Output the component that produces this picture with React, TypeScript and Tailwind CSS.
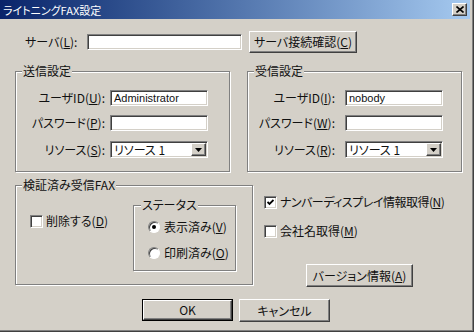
import React from "react";

const sunken =
  "bg-white border border-t-[#808080] border-l-[#808080] border-b-white border-r-white shadow-[inset_1px_1px_0_#404040,inset_-1px_-1px_0_#d4d0c8]";
const raised =
  "bg-[#d4d0c8] border border-t-white border-l-white border-b-[#404040] border-r-[#404040] shadow-[inset_-1px_-1px_0_#808080]";
const etched = "border border-[#808080] shadow-[inset_1px_1px_0_#ffffff,1px_1px_0_#ffffff]";

function K({ c }: { c: string }) {
  return <span className="underline decoration-1 underline-offset-[1px]">{c}</span>;
}

function CheckBox({ checked }: { checked?: boolean }) {
  return (
    <div className={`${sunken} w-[13px] h-[13px] flex-none flex items-center justify-center`}>
      {checked && (
        <svg width="7" height="7" viewBox="0 0 7 7">
          <polyline points="0.5,3 2.5,5 6.5,1" fill="none" stroke="black" strokeWidth="1.8" />
        </svg>
      )}
    </div>
  );
}

function Radio({ checked }: { checked?: boolean }) {
  return (
    <div className="w-[12px] h-[12px] flex-none rounded-full bg-white border border-t-[#808080] border-l-[#808080] border-r-white border-b-white shadow-[inset_1px_1px_0_#404040] flex items-center justify-center">
      {checked && <div className="w-[4px] h-[4px] rounded-full bg-black" />}
    </div>
  );
}

function Field({ text }: { text?: string }) {
  return (
    <div
      className={`${sunken} w-[98px] h-[16px] flex items-center pl-[3px] text-[11px] font-['Liberation_Sans',sans-serif]`}
    >
      {text}
    </div>
  );
}

function Select() {
  return (
    <div className={`${sunken} w-[98px] h-[17px] flex items-center justify-between pl-[3px] pr-[1px]`}>
      <span className="whitespace-nowrap">リソース 1</span>
      <div className={`${raised} w-[15px] h-[13px] flex items-center justify-center`}>
        <svg width="7" height="4" viewBox="0 0 7 4">
          <polygon points="0,0 7,0 3.5,4" fill="black" />
        </svg>
      </div>
    </div>
  );
}

function Group({
  title,
  labelW,
  gap,
  rows,
}: {
  title: string;
  labelW: string;
  gap: string;
  rows: { label: React.ReactNode; ctrl: React.ReactNode; cls: string }[];
}) {
  return (
    <fieldset className={`${etched} w-[215px] h-[108px] flex-none`}>
      <legend className="ml-[6px] px-[1px] bg-[#d4d0c8] leading-[14px]">{title}</legend>
      <div className="mt-[12px] flex flex-col">
        {rows.map((r, i) => (
          <div key={i} className={`flex items-center ${r.cls}`}>
            <span className={`${labelW} text-right whitespace-nowrap`}>{r.label}</span>
            <div className={gap}>{r.ctrl}</div>
          </div>
        ))}
      </div>
    </fieldset>
  );
}

export default function App() {
  return (
    <div className="w-[474px] h-[332px] bg-[#d4d0c8] shadow-[inset_-1px_-1px_0_#404040,inset_-2px_-2px_0_#808080] overflow-hidden text-[#111111] text-[12px] leading-[14px] font-['Noto_Sans_CJK_JP','Noto_Sans_CJK_SC',sans-serif] [font-feature-settings:'palt']">
      <div className="h-[19px] mr-[4px] bg-linear-to-r from-[#0a246a] to-[#a6caf0] flex items-center justify-between">
        <span className="pl-[3px] text-white text-[11px] whitespace-nowrap">ライトニングFAX設定</span>
        <div className={`${raised} w-[15px] h-[13px] mr-[3px] flex items-center justify-center`}>
          <svg width="8" height="7" viewBox="0 0 8 7">
            <path d="M0.5 0.5 L7.5 6.5 M7.5 0.5 L0.5 6.5" stroke="black" strokeWidth="1.6" />
          </svg>
        </div>
      </div>

      <div className="pl-[15px]">
        <div className="mt-[12px] h-[22px] flex items-center">
          <span className="ml-[10px] w-[52px] whitespace-nowrap">
            サーバ(<K c="L" />):
          </span>
          <div className={`${sunken} ml-[10px] w-[155px] h-[16px]`} />
          <div className={`${raised} ml-[7px] w-[108px] h-[22px] flex items-center justify-center whitespace-nowrap`}>
            サーバ接続確認(<K c="C" />)
          </div>
        </div>

        <div className="mt-[11px] flex gap-[17px]">
          <Group
            title="送信設定"
            labelW="w-[89px]"
            gap="ml-[5px]"
            rows={[
              { label: <>ユーザID(<K c="U" />):</>, ctrl: <Field text="Administrator" />, cls: "h-[16px]" },
              { label: <>パスワード(<K c="P" />):</>, ctrl: <Field />, cls: "h-[16px] mt-[9px]" },
              { label: <>リソース(<K c="S" />):</>, ctrl: <Select />, cls: "h-[17px] mt-[10px]" },
            ]}
          />
          <Group
            title="受信設定"
            labelW="w-[87px]"
            gap="ml-[10px]"
            rows={[
              { label: <>ユーザID(<K c="I" />):</>, ctrl: <Field text="nobody" />, cls: "h-[16px]" },
              { label: <>パスワード(<K c="W" />):</>, ctrl: <Field />, cls: "h-[16px] mt-[9px]" },
              { label: <>リソース(<K c="R" />):</>, ctrl: <Select />, cls: "h-[17px] mt-[10px]" },
            ]}
          />
        </div>

        <div className="mt-[6px] flex">
          <fieldset className={`${etched} w-[238px] h-[107px] flex-none`}>
            <legend className="ml-[6px] px-[1px] bg-[#d4d0c8] leading-[14px]">検証済み受信FAX</legend>
            <div className="flex">
              <div className="w-[117px] pl-[14px] pt-[22px] flex-none">
                <div className="h-[14px] flex items-center gap-[3px] whitespace-nowrap">
                  <CheckBox />
                  <span>削除する(<K c="D" />)</span>
                </div>
              </div>
              <fieldset className={`${etched} mt-[6px] w-[103px] h-[73px] flex-none`}>
                <legend className="ml-[7px] px-[1px] bg-[#d4d0c8] leading-[14px]">ステータス</legend>
                <div className="pl-[14px] flex flex-col">
                  <div className="mt-[8px] h-[14px] flex items-center gap-[4px] whitespace-nowrap">
                    <Radio checked />
                    <span>表示済み(<K c="V" />)</span>
                  </div>
                  <div className="mt-[12px] h-[14px] flex items-center gap-[4px] whitespace-nowrap">
                    <Radio />
                    <span>印刷済み(<K c="O" />)</span>
                  </div>
                </div>
              </fieldset>
            </div>
          </fieldset>

          <div className="ml-[11px] flex flex-col">
            <div className="mt-[17px] h-[14px] flex items-center gap-[3px] whitespace-nowrap">
              <CheckBox checked />
              <span className="tracking-[-0.5px]">ナンバーディスプレイ情報取得(<K c="N" />)</span>
            </div>
            <div className="mt-[15px] h-[14px] flex items-center gap-[3px] whitespace-nowrap">
              <CheckBox />
              <span>会社名取得(<K c="M" />)</span>
            </div>
            <div
              className={`${raised} mt-[26px] ml-[42px] w-[107px] h-[23px] flex items-center justify-center whitespace-nowrap`}
            >
              バージョン情報(<K c="A" />)
            </div>
          </div>
        </div>

        <div className="mt-[12px] flex items-start">
          <div className="ml-[127px] w-[91px] h-[22px] border border-black flex">
            <div className={`${raised} flex-1 flex items-center justify-center`}>OK</div>
          </div>
          <div className={`${raised} ml-[6px] w-[91px] h-[23px] flex items-center justify-center whitespace-nowrap`}>
            キャンセル
          </div>
        </div>
      </div>
    </div>
  );
}
